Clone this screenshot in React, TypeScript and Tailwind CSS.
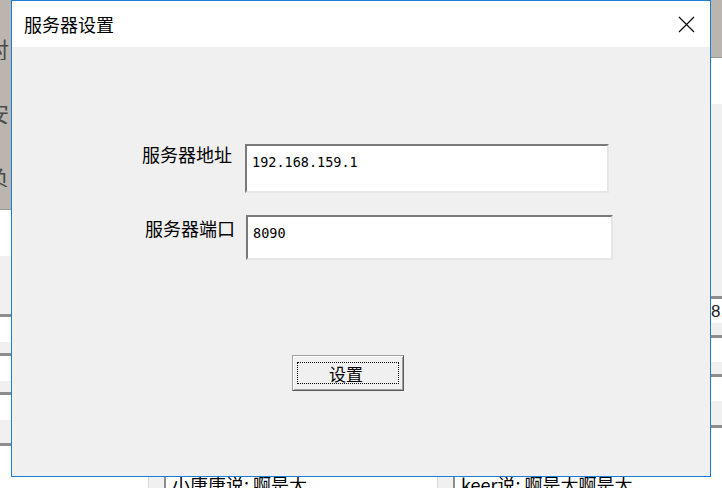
import { ReactNode } from "react";

const cjk = "font-['Noto_Sans_CJK_SC','Noto_Sans',sans-serif]";

// strip of the main window peeking out from behind the dialog
function Band({ h, line }: { h: number; line?: boolean }) {
  return (
    <div
      className={line ? "bg-[#f0f0f0] border-b-[3px] border-[#8d8d8d]" : "bg-white"}
      style={{ height: h }}
    />
  );
}

function PeekChar({ children, h }: { children: ReactNode; h: number }) {
  return (
    <div className="flex items-center overflow-hidden" style={{ height: h }}>
      <span className={`${cjk} -ml-[13px] text-[22px] leading-none text-[#4a4a4a]`}>{children}</span>
    </div>
  );
}

function LeftStrip() {
  return (
    <div className="flex w-[11px] shrink-0 flex-col">
      <div className="flex h-[210px] flex-col border-b border-[#9b968f] bg-[#bab5ae] pt-[36px]">
        <PeekChar h={24}>对</PeekChar>
        <div className="h-[40px]" />
        <PeekChar h={24}>安</PeekChar>
        <div className="h-[39px]" />
        <PeekChar h={24}>负</PeekChar>
      </div>
      <Band h={46} />
      <Band h={61} line />
      <Band h={25} />
      <Band h={14} line />
      <Band h={25} />
      <Band h={14} line />
      <Band h={25} />
      <Band h={26} line />
      <div className="flex-1 bg-white" />
    </div>
  );
}

function RightStrip() {
  return (
    <div className="flex w-[11px] shrink-0 flex-col">
      <div className="h-[58px] border-b border-[#9b968f] bg-[#bab5ae]" />
      <Band h={46} />
      <Band h={195} line />
      <div className="flex h-[24px] items-center overflow-hidden bg-white">
        <span className="font-['Liberation_Sans',sans-serif] text-[17px] leading-none text-[#222]">8.</span>
      </div>
      <Band h={15} line />
      <Band h={24} />
      <Band h={15} line />
      <Band h={24} />
      <Band h={27} line />
      <div className="flex-1 bg-white" />
    </div>
  );
}

function ChatColumn({ text, width }: { text: string; width: number }) {
  return (
    <div className="flex h-full" style={{ width }}>
      <div className="h-full w-[18px] shrink-0 border-l border-r-2 border-l-[#d9d9d9] border-r-[#8d8d8d] bg-[#f0f0f0]" />
      <span className={`${cjk} ml-[6px] whitespace-nowrap pt-[6px] text-[18px] leading-[20px] text-black`}>
        {text}
      </span>
    </div>
  );
}

function SunkenInput({ value, w, h }: { value: string; w: number; h: number }) {
  return (
    <div
      className="border-2 border-t-[#7a7a7a] border-l-[#7a7a7a] border-r-[#e6e6e6] border-b-[#e6e6e6] bg-white pl-[5px] pt-[3px]"
      style={{ width: w, height: h }}
    >
      <span className="font-['DejaVu_Sans_Mono',monospace] text-[13.5px] leading-[16px] text-black">{value}</span>
    </div>
  );
}

function ServerDialog() {
  return (
    <div className="absolute left-[11px] top-0 flex h-[477px] w-[700px] flex-col border border-[#1a7fd9] bg-[#f0f0f0]">
      <div className="flex h-[46px] shrink-0 items-center justify-between bg-white pl-[12px] pr-[15px]">
        <span className={`${cjk} text-[18px] leading-none text-black`}>服务器设置</span>
        <svg width="17" height="17" viewBox="0 0 17 17" className="shrink-0">
          <path d="M1 1L16 16M16 1L1 16" stroke="#000" strokeWidth="1.1" fill="none" />
        </svg>
      </div>

      <div className="flex flex-col pt-[97px]">
        <div className="flex items-start pl-[130px]">
          <span className={`${cjk} w-[90px] text-[18px] leading-[20px] text-black`}>服务器地址</span>
          <div className="ml-[13px]">
            <SunkenInput value="192.168.159.1" w={364} h={49} />
          </div>
        </div>
        <div className="mt-[22px] flex items-start pl-[133px]">
          <span className={`${cjk} mt-[3px] w-[90px] text-[18px] leading-[20px] text-black`}>服务器端口</span>
          <div className="ml-[11px]">
            <SunkenInput value="8090" w={367} h={45} />
          </div>
        </div>

        <div className="mt-[95px] flex pl-[280px]">
          <button className="flex h-[36px] w-[112px] border border-t-[#a0a0a0] border-l-[#a0a0a0] border-r-[#5a5a5a] border-b-[#5a5a5a] bg-[#f0f0f0] px-[4px] py-[6px] shadow-[inset_1px_1px_0_#fff,inset_-1px_-1px_0_#a0a0a0]">
            <span className={`${cjk} flex flex-1 items-center justify-center border border-dotted border-black pr-[4px] text-[17px] leading-none text-black`}>
              设置
            </span>
          </button>
        </div>
      </div>
    </div>
  );
}

export default function App() {
  return (
    <div className="relative h-[488px] w-[722px] overflow-hidden bg-white">
      <div className="flex h-full w-full">
        <LeftStrip />
        <div className="flex flex-1 flex-col justify-end bg-white">
          <div className="flex h-[20px] overflow-hidden">
            <div className="w-[137px] shrink-0" />
            <ChatColumn text="小唐唐说: 啊是太" width={289} />
            <ChatColumn text="keer说: 啊是大啊是大" width={274} />
          </div>
        </div>
        <RightStrip />
      </div>
      <ServerDialog />
    </div>
  );
}
